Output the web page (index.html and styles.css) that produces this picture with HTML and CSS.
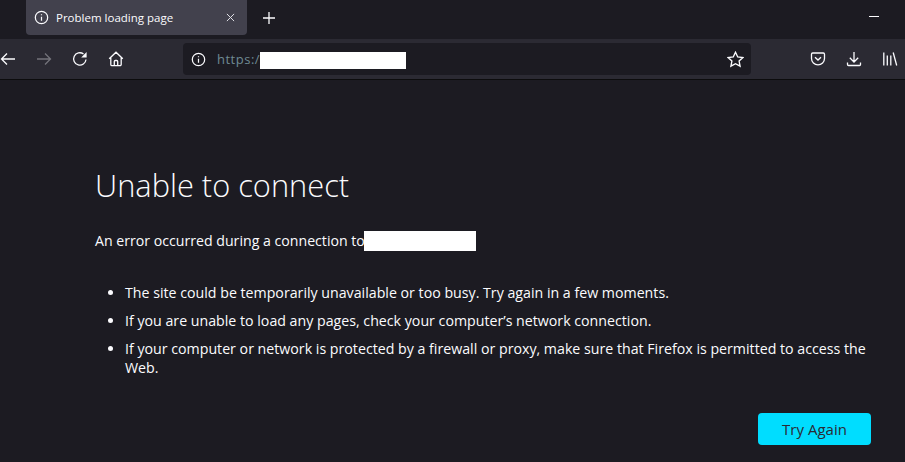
FILE: index.html
```html
<!DOCTYPE html>
<html lang="en">
<head>
<meta charset="utf-8">
<title>Problem loading page</title>
<link rel="stylesheet" href="styles.css">
</head>
<body>
<div class="tabbar">
  <div class="tab">
    <svg class="ico tab-ico" viewBox="0 0 16 16"><circle cx="8" cy="8" r="6.6"/><path d="M8 7.2v4.2M8 4.4v1.3"/></svg>
    <span class="tab-title">Problem loading page</span>
    <svg class="tab-close" viewBox="0 0 10 10"><path d="M1 1l8 8M9 1l-8 8"/></svg>
  </div>
  <svg class="newtab" viewBox="0 0 12 12"><path d="M6 0v12M0 6h12"/></svg>
  <div class="minimize"></div>
</div>
<div class="navbar">
  <svg class="ico nav-ico back" viewBox="0 0 16 16"><path d="M15 8H1.5M7 2.5L1.5 8 7 13.5"/></svg>
  <svg class="ico nav-ico fwd" viewBox="0 0 16 16"><path d="M1 8h13.5M9 2.5L14.5 8 9 13.5"/></svg>
  <svg class="ico nav-ico reload" viewBox="0 0 16 16"><path d="M14 8.5A6.2 6.2 0 1 1 11.5 3"/><path class="fill" d="M14.6 1v5.4H9.2z"/></svg>
  <svg class="ico nav-ico home" viewBox="0 0 16 16"><path d="M1.2 7.8L8 1.2l6.800 6.600M2.800 6.400v7a1.200 1.200 0 0 0 1.200 1.200h8a1.200 1.200 0 0 0 1.200-1.200v-7M6.300 14.500v-4a1 1 0 0 1 1-1h1.400a1 1 0 0 1 1 1v4"/></svg>
  <div class="urlbar">
    <svg class="ico url-info" viewBox="0 0 16 16"><circle cx="8" cy="8" r="6.6"/><path d="M8 7.2v4.200M8 4.400v1.300"/></svg>
    <span class="url-text">https:/</span><span class="redact url-redact"></span>
    <svg class="ico star" viewBox="0 0 16 16"><path d="M8 1.200l2.100 4.400 4.800.6-3.500 3.300.9 4.800L8 12l-4.300 2.300.9-4.800L1.100 6.200l4.800-.6z"/></svg>
  </div>
  <div class="nav-right">
    <svg class="ico nav-ico" viewBox="0 0 16 16"><path d="M2.700 2h10.600a1.200 1.200 0 0 1 1.200 1.200v4.300a6.500 6.300 0 0 1-13 0V3.200a1.200 1.200 0 0 1 1.200-1.200zM5 6.200l3 2.800 3-2.800"/></svg>
    <svg class="ico nav-ico" viewBox="0 0 16 16"><path d="M8 1v9.800M3.800 6.800L8 11l4.200-4.200M1.500 11.500v2a1 1 0 0 0 1 1h11a1 1 0 0 0 1-1v-2"/></svg>
    <svg class="ico nav-ico" viewBox="0 0 16 16"><path d="M1.800 1.500v13M5.300 4.500v10M8.800 4.500v10M11.200 1.500l3.500 13"/></svg>
  </div>
</div>
<main class="content">
  <h1>Unable to connect</h1>
  <p class="lead"><span>An error occurred during a connection to</span><span class="redact lead-redact"></span></p>
  <ul>
    <li>The site could be temporarily unavailable or too busy. Try again in a few moments.</li>
    <li>If you are unable to load any pages, check your computer’s network connection.</li>
    <li>If your computer or network is protected by a firewall or proxy, make sure that Firefox is permitted to access the Web.</li>
  </ul>
  <div class="actions"><button class="retry">Try Again</button></div>
</main>
</body>
</html>
```
FILE: styles.css
```css
* { box-sizing: border-box; }
html, body { margin: 0; height: 100%; }
body {
  width: 905px;
  height: 462px;
  overflow: hidden;
  background: #1c1b22;
  color: #fbfbfe;
  font-family: "Open Sans", "Noto Sans", sans-serif;
}
.ico { fill: none; stroke: #fbfbfe; stroke-width: 1.3; flex: none; }
.ico .fill { fill: #fbfbfe; stroke: none; }
.tabbar {
  height: 39px;
  display: flex;
  align-items: flex-start;
  padding-left: 26px;
}
.tab {
  width: 221px;
  height: 35px;
  background: #42414d;
  border-radius: 0 0 4px 4px;
  display: flex;
  align-items: center;
  padding-left: 8px;
}
.tab-ico { width: 15px; height: 15px; }
.tab-title { margin-left: 7px; font-size: 11.5px; flex: 1; }
.tab-close { width: 9px; height: 9px; margin-right: 12px; fill: none; stroke: #e0e0e6; stroke-width: 1.100; }
.newtab { width: 12px; height: 12px; margin: 12px 0 0 16px; fill: none; stroke: #fbfbfe; stroke-width: 1.300; }
.minimize { width: 10px; height: 1px; margin: 16px 26px 0 auto; background: #fbfbfe; }
.navbar {
  height: 41px;
  background: #2b2a33;
  border-bottom: 1px solid #0c0c0d;
  display: flex;
  align-items: center;
  padding-left: 0;
}
.nav-ico { width: 16px; height: 16px; }
.back { margin-left: 0; }
.fwd { margin-left: 20px; stroke: #74737b; }
.reload { margin-left: 20px; }
.home { margin-left: 20px; }
.urlbar {
  width: 568px;
  height: 32px;
  margin-left: 59px;
  background: #1c1b22;
  border-radius: 4px;
  display: flex;
  align-items: center;
  padding-left: 8px;
}
.url-info { width: 15px; height: 15px; }
.url-text { margin-left: 11px; font-size: 13px; color: #6f8a94; letter-spacing: .5px; }
.redact { display: inline-block; background: #fff; }
.url-redact { width: 146px; height: 17px; margin-top: 2px; }
.star { width: 17px; height: 17px; margin-left: auto; margin-right: 7px; }
.nav-right { display: flex; gap: 20px; margin-left: 59px; }
.content { padding: 83px 34px 0 95px; }
h1 {
  margin: 0;
  font-size: 30.800px;
  line-height: 44px;
  font-weight: 300;
  color: #fbfbfe;
}
.lead {
  margin: 24px 0 0;
  display: flex;
  align-items: center;
  height: 20px;
  font-size: 14.150px;
  line-height: 20px;
}
.lead-redact { width: 112px; height: 20px; margin-left: -1px; }
ul { margin: 32px 0 0; padding: 0 0 0 30px; font-size: 14.200px; line-height: 19px; }
li { margin-bottom: 9px; }
.actions { display: flex; justify-content: flex-end; margin-top: 36px; }
.retry {
  width: 113px;
  height: 32px;
  border: none;
  border-radius: 4px;
  background: #00ddff;
  color: #2b2a33;
  font: 500 15px "Open Sans", sans-serif;
}
```
